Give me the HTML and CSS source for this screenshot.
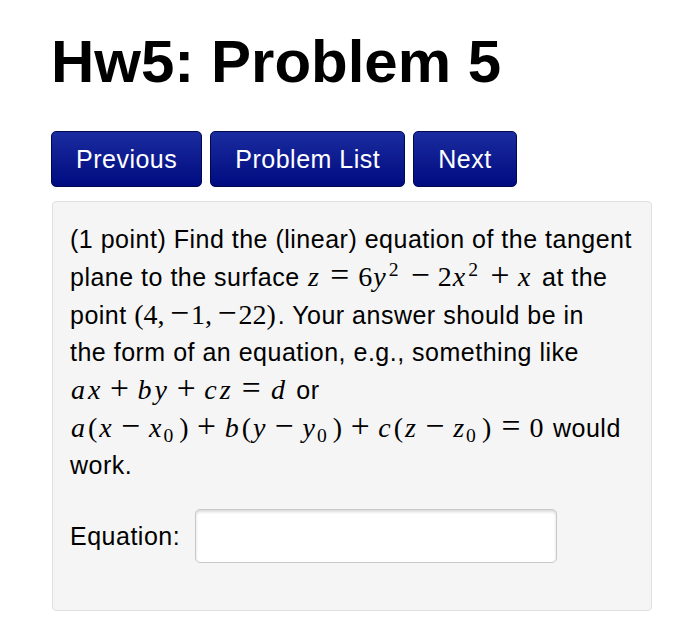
FILE: index.html
```html
<!DOCTYPE html>
<html lang="en">
<head>
  <meta charset="UTF-8">
  <meta name="viewport" content="width=device-width, initial-scale=1.0">
  <title>Hw5: Problem 5</title>
  <link rel="stylesheet" href="styles.css">
</head>
<body>
  <h1>Hw5: Problem 5</h1>

  <div class="nav">
    <a href="#" class="btn">Previous</a>
    <a href="#" class="btn">Problem List</a>
    <a href="#" class="btn">Next</a>
  </div>

  <div class="problem">
    <p>(1 point) Find the (linear) equation of the tangent<br>
      plane to the surface
      <span class="m"><i>z</i><span class="rel">=</span>6<i>y</i><sup>2</sup><span class="op">−</span>2<i>x</i><sup>2</sup><span class="op">+</span><i>x</i></span> at the<br>
      point <span class="m">(4,<span class="th"></span><span class="neg">−</span>1,<span class="th"></span><span class="neg">−</span>22)</span>. Your answer should be in<br>
      the form of an equation, e.g., something like<br>
      <span class="m"><i>a</i><i>x</i><span class="op">+</span><i>b</i><i>y</i><span class="op">+</span><i>c</i><i>z</i><span class="rel">=</span><i>d</i></span> or<br>
      <span class="m"><i>a</i><span class="pr">(</span><i>x</i><span class="op">−</span><i>x</i><sub>0</sub><span class="pr">)</span><span class="op">+</span><i>b</i><span class="pr">(</span><i>y</i><span class="op">−</span><i>y</i><sub>0</sub><span class="pr">)</span><span class="op">+</span><i>c</i><span class="pr">(</span><i>z</i><span class="op">−</span><i>z</i><sub>0</sub><span class="pr">)</span><span class="rel">=</span>0</span> would<br>
      work.</p>

    <div class="answer">
      <label for="ans">Equation:</label>
      <input type="text" id="ans" class="ans-input">
    </div>
  </div>
</body>
</html>
```

FILE: styles.css
```css
body { margin: 0; padding: 0 48px 0 51px; font-family: "Liberation Sans", Arial, sans-serif; color: #000; background: #fff; }
h1 { font-size: 60px; font-weight: bold; line-height: 70px; margin: 27px 0 34px 0; }
.nav { display: flex; gap: 8px; margin-bottom: 14px; }
.btn { display: inline-block; padding: 13px 24px; line-height: 28px; font-size: 25px; letter-spacing: 0.5px; color: #fff; text-decoration: none;
       background: linear-gradient(#1a2c9f, #000b80); border: 1px solid #00094f; border-radius: 5px; }
.problem { background: #f5f5f5; border: 1px solid #e0e0e0; border-radius: 4px; padding: 19px 10px 47px 17px; margin-left: 1px; }
.problem p { margin: 0 0 25px 0; font-size: 25px; letter-spacing: 0.5px; line-height: 37px; }
/* math set with MathJax-like metrics */
.m { font-family: "Liberation Serif", "Times New Roman", serif; font-size: 28px; letter-spacing: 0; white-space: nowrap; margin-right: 2px; }
.m i { font-style: italic; padding: 0 2px 0 1px; }
.m .pr { padding: 0 1px; }
.m .op, .m .rel, .m .neg { display: inline-block; font-size: 1.2em; line-height: 0; width: 0.648em; text-align: center; }
.m .op { margin: 0 0.185em; }
.m .rel { margin: 0 0.232em; }
.m .th { display: inline-block; width: 0.167em; }
.m sup { font-size: 0.7em; line-height: 0; vertical-align: 0.5em; margin: 0 5px 0 1px; }
.m sub { font-size: 0.7em; line-height: 0; vertical-align: -0.25em; margin-right: 5px; }
.answer { display: flex; align-items: center; gap: 15px; }
.answer label { font-size: 25px; letter-spacing: 0.5px; }
.ans-input { width: 360px; height: 52px; box-sizing: content-box; padding: 0; margin: 0; border: 1px solid #c8c8c8; border-radius: 5px;
             background: #fff; box-shadow: inset 0 2px 3px rgba(0,0,0,0.15); font-size: 20px; }
```
